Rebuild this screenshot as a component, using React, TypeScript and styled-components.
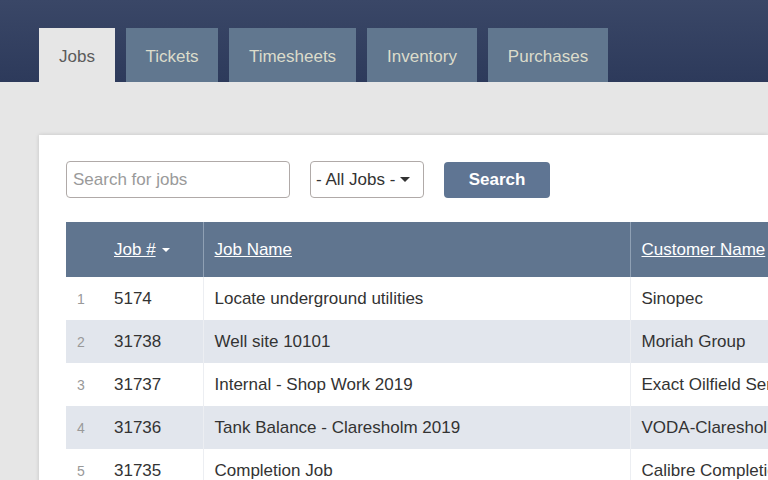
import styled, { createGlobalStyle } from 'styled-components';

interface Job {
  num: number;
  id: string;
  name: string;
  customer: string;
}

const jobs: Job[] = [
  { num: 1, id: '5174', name: 'Locate underground utilities', customer: 'Sinopec' },
  { num: 2, id: '31738', name: 'Well site 10101', customer: 'Moriah Group' },
  { num: 3, id: '31737', name: 'Internal - Shop Work 2019', customer: 'Exact Oilfield Services' },
  { num: 4, id: '31736', name: 'Tank Balance - Claresholm 2019', customer: 'VODA-Claresholm' },
  { num: 5, id: '31735', name: 'Completion Job', customer: 'Calibre Completions' },
];

const tabs = ['Jobs', 'Tickets', 'Timesheets', 'Inventory', 'Purchases'];

const App = () => {
  return (
    <>
      <GlobalStyle />
      <Header>
        <Tabs>
          {tabs.map((t, i) => (
            <Tab key={t} $active={i === 0}>
              {t}
            </Tab>
          ))}
        </Tabs>
      </Header>
      <Main>
        <Card>
          <Toolbar>
            <SearchInput placeholder="Search for jobs" />
            <Select>
              - All Jobs -
              <Caret />
            </Select>
            <SearchButton>Search</SearchButton>
          </Toolbar>
          <Table>
            <colgroup>
              <col style={{ width: 37 }} />
              <col style={{ width: 100 }} />
              <col style={{ width: 427 }} />
              <col style={{ width: 260 }} />
              <col style={{ width: 160 }} />
            </colgroup>
            <thead>
              <tr>
                <Th />
                <Th>
                  <HeadLink>Job #</HeadLink>
                  <SortCaret />
                </Th>
                <Th $divider>
                  <HeadLink>Job Name</HeadLink>
                </Th>
                <Th $divider>
                  <HeadLink>Customer Name</HeadLink>
                </Th>
                <Th $divider>
                  <HeadLink>Status</HeadLink>
                </Th>
              </tr>
            </thead>
            <tbody>
              {jobs.map((j) => (
                <Row key={j.id} $striped={j.num % 2 === 0}>
                  <NumCell>{j.num}</NumCell>
                  <Td>{j.id}</Td>
                  <Td $divider>{j.name}</Td>
                  <Td $divider>{j.customer}</Td>
                  <Td $divider>Active</Td>
                </Row>
              ))}
            </tbody>
          </Table>
        </Card>
      </Main>
    </>
  );
};

export default App;

const GlobalStyle = createGlobalStyle`
  html, body {
    margin: 0;
    padding: 0;
    overflow: hidden;
    background: #e6e6e6;
  }
  body {
    font-family: "Liberation Sans", Arial, sans-serif;
  }
`;

const Header = styled.header`
  height: 82px;
  background: linear-gradient(180deg, #3a4767 0%, #2d3a5b 100%);
  display: flex;
  align-items: flex-end;
  padding-left: 39px;
`;

const Tabs = styled.nav`
  display: flex;
  gap: 11px;
`;

const Tab = styled.div<{ $active?: boolean }>`
  height: 54px;
  padding: 4px 20px 0;
  box-sizing: border-box;
  display: flex;
  align-items: center;
  font-size: 17px;
  background: ${(p) => (p.$active ? '#e6e6e6' : '#61778f')};
  color: ${(p) => (p.$active ? '#5b5b5b' : '#dcdccb')};
  &:nth-child(1) { width: 76px; justify-content: center; }
  &:nth-child(2) { width: 92px; justify-content: center; }
  &:nth-child(3) { width: 127px; justify-content: center; }
  &:nth-child(4) { width: 110px; justify-content: center; }
  &:nth-child(5) { width: 120px; justify-content: center; }
`;

const Main = styled.main`
  padding: 53px 0 0 39px;
`;

const Card = styled.section`
  background: #fff;
  box-shadow: 0 0 4px rgba(0, 0, 0, 0.15);
  padding: 26px 0 0 27px;
  height: 400px;
  overflow: hidden;
`;

const Toolbar = styled.div`
  display: flex;
  align-items: center;
  gap: 20px;
  margin-bottom: 24px;
`;

const SearchInput = styled.input`
  box-sizing: border-box;
  width: 224px;
  height: 37px;
  border: 1px solid #b0aaa8;
  border-radius: 4px;
  padding: 0 6px;
  font-family: inherit;
  font-size: 17px;
  color: #333;
  outline: none;
  &::placeholder {
    color: #9a9a9a;
  }
`;

const Select = styled.div`
  box-sizing: border-box;
  width: 114px;
  height: 37px;
  border: 1px solid #b0aaa8;
  border-radius: 4px;
  padding: 0 5px;
  display: flex;
  align-items: center;
  gap: 5px;
  font-size: 17px;
  color: #333;
`;

const Caret = styled.span`
  width: 0;
  height: 0;
  border-left: 5px solid transparent;
  border-right: 5px solid transparent;
  border-top: 5px solid #333;
`;

const SearchButton = styled.button`
  width: 106px;
  height: 36px;
  border: none;
  border-radius: 4px;
  background: #5f7593;
  color: #fff;
  font-family: inherit;
  font-size: 17px;
  font-weight: bold;
`;

const Table = styled.table`
  border-collapse: collapse;
  table-layout: fixed;
  width: 984px;
  font-size: 17px;
`;

const Th = styled.th<{ $divider?: boolean }>`
  height: 55px;
  padding: 0 11px;
  background: #60758f;
  text-align: left;
  font-weight: normal;
  white-space: nowrap;
  border-left: ${(p) => (p.$divider ? '1px solid #8fa0b4' : 'none')};
`;

const HeadLink = styled.span`
  color: #fff;
  text-decoration: underline;
`;

const SortCaret = styled.span`
  display: inline-block;
  margin-left: 6px;
  vertical-align: middle;
  width: 0;
  height: 0;
  border-left: 4px solid transparent;
  border-right: 4px solid transparent;
  border-top: 4px solid #fff;
`;

const Row = styled.tr<{ $striped?: boolean }>`
  background: ${(p) => (p.$striped ? '#e2e6ed' : '#fff')};
`;

const Td = styled.td<{ $divider?: boolean }>`
  height: 43px;
  padding: 0 11px;
  color: #333;
  white-space: nowrap;
  overflow: hidden;
  border-left: ${(p) => (p.$divider ? '1px solid #eceef2' : 'none')};
`;

const NumCell = styled.td`
  height: 43px;
  padding: 0 0 0 11px;
  color: #999;
  font-size: 14px;
  vertical-align: middle;
`;
